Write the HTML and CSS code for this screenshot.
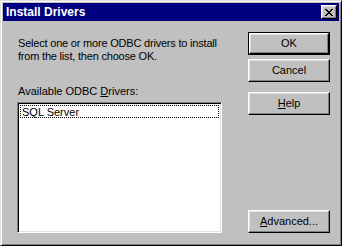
FILE: index.html
```html
<!DOCTYPE html>
<html>
<head>
<meta charset="utf-8">
<link rel="stylesheet" href="styles.css">
</head>
<body>
<div class="window">
  <div class="titlebar">
    <span class="title">Install Drivers</span>
    <button class="close" aria-label="Close">
      <svg width="8" height="7" viewBox="0 0 8 7" shape-rendering="crispEdges">
        <rect x="0" y="0" width="2" height="1" fill="#000"/>
        <rect x="6" y="0" width="2" height="1" fill="#000"/>
        <rect x="1" y="1" width="2" height="1" fill="#000"/>
        <rect x="5" y="1" width="2" height="1" fill="#000"/>
        <rect x="2" y="2" width="4" height="1" fill="#000"/>
        <rect x="3" y="3" width="2" height="1" fill="#000"/>
        <rect x="2" y="4" width="4" height="1" fill="#000"/>
        <rect x="1" y="5" width="2" height="1" fill="#000"/>
        <rect x="5" y="5" width="2" height="1" fill="#000"/>
        <rect x="0" y="6" width="2" height="1" fill="#000"/>
        <rect x="6" y="6" width="2" height="1" fill="#000"/>
      </svg>
    </button>
  </div>
  <div class="content">
    <div class="left">
      <p class="intro">Select one or more ODBC drivers to install<br>from the list, then choose OK.</p>
      <div class="label">Available ODBC <u>D</u>rivers:</div>
      <div class="listbox">
        <div class="item">SQL Server</div>
      </div>
    </div>
    <div class="right">
      <div class="default"><button class="btn">OK</button></div>
      <button class="btn cancel">Cancel</button>
      <button class="btn help"><u>H</u>elp</button>
      <button class="btn advanced"><u>A</u>dvanced...</button>
    </div>
  </div>
</div>
</body>
</html>
```
FILE: styles.css
```css
html, body {
  margin: 0;
  padding: 0;
  background: #c0c0c0;
}
body {
  font-family: "Liberation Sans", Arial, sans-serif;
  font-size: 11px;
  color: #000;
}
.window {
  width: 342px;
  height: 246px;
  box-sizing: border-box;
  background: #c0c0c0;
  border-top: 1px solid #dfdfdf;
  border-left: 1px solid #dfdfdf;
  border-right: 1px solid #000;
  border-bottom: 1px solid #000;
  box-shadow: inset 1px 1px 0 #fff, inset -1px -1px 0 #808080;
  padding: 2px;
  display: flex;
  flex-direction: column;
}
.titlebar {
  height: 18px;
  background: #000080;
  display: flex;
  align-items: center;
  justify-content: space-between;
  padding: 0 2px 0 3px;
}
.title {
  color: #fff;
  font-weight: bold;
  font-size: 12px;
  line-height: 18px;
}
.close {
  width: 16px;
  height: 14px;
  padding: 0;
  margin: 0;
  box-sizing: border-box;
  background: #c0c0c0;
  border-top: 1px solid #fff;
  border-left: 1px solid #fff;
  border-right: 1px solid #000;
  border-bottom: 1px solid #000;
  box-shadow: inset -1px -1px 0 #808080, inset 1px 1px 0 #dfdfdf;
  display: flex;
  align-items: center;
  justify-content: center;
}
.close svg {
  display: block;
  margin-left: -1px;
}
.content {
  flex: 1;
  display: flex;
  padding: 11px 9px 10px 14px;
}
.left {
  width: 205px;
  display: flex;
  flex-direction: column;
  padding-top: 5px;
}
.intro {
  margin: 0;
  line-height: 13px;
  padding-left: 1px;
  white-space: nowrap;
  letter-spacing: -0.2px;
}
.label {
  margin-top: 22px;
  line-height: 13px;
  padding-left: 1px;
  white-space: nowrap;
}
.listbox {
  margin-top: 4px;
  height: 131px;
  box-sizing: border-box;
  background: #fff;
  border-top: 1px solid #808080;
  border-left: 1px solid #808080;
  border-right: 1px solid #fff;
  border-bottom: 1px solid #fff;
  box-shadow: inset 1px 1px 0 #000, inset -1px -1px 0 #dfdfdf;
  padding: 2px;
}
.item {
  height: 13px;
  line-height: 12px;
  box-sizing: border-box;
  border: 1px dotted #000;
  padding-left: 1px;
}
.right {
  margin-left: 26px;
  width: 82px;
  display: flex;
  flex-direction: column;
}
.btn {
  font-family: "Liberation Sans", Arial, sans-serif;
  font-size: 11px;
  color: #000;
  width: 82px;
  height: 23px;
  margin: 0;
  padding: 0;
  box-sizing: border-box;
  background: #c0c0c0;
  border-top: 1px solid #fff;
  border-left: 1px solid #fff;
  border-right: 1px solid #000;
  border-bottom: 1px solid #000;
  box-shadow: inset -1px -1px 0 #808080, inset 1px 1px 0 #dfdfdf;
  text-align: center;
  line-height: 19px;
}
.default {
  width: 82px;
  height: 23px;
  box-sizing: border-box;
  border: 1px solid #000;
}
.default .btn {
  width: 80px;
  height: 21px;
  line-height: 17px;
}
.cancel {
  margin-top: 4px;
}
.help {
  margin-top: 10px;
}
.advanced {
  margin-top: auto;
}
u {
  text-decoration: underline;
  text-underline-offset: 1px;
}
```
